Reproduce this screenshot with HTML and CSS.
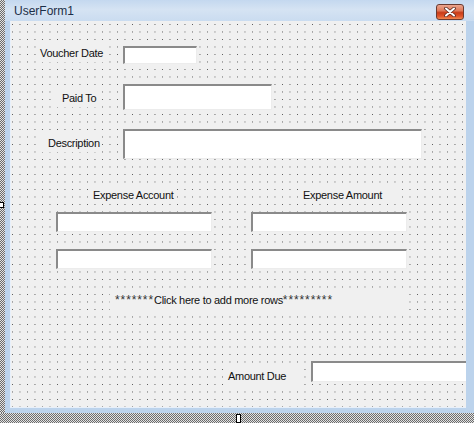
FILE: index.html
```html
<!DOCTYPE html>
<html>
<head>
<meta charset="utf-8">
<link rel="stylesheet" href="styles.css">
</head>
<body>
<div class="screen">
  <div class="hatch hatch-left"></div>
  <div class="window">
    <div class="titlebar">
      <span class="title">UserForm1</span>
      <span class="close">
        <svg width="14" height="10" viewBox="0 0 14 10"><path d="M3 1.5 L11 8.5 M11 1.5 L3 8.5" stroke="#5a2a20" stroke-width="3.6" stroke-linecap="round"/><path d="M3 1.5 L11 8.5 M11 1.5 L3 8.5" stroke="#ffffff" stroke-width="2" stroke-linecap="round"/></svg>
      </span>
    </div>
    <div class="client">
      <div class="canvas">
        <span class="lbl lbl-vd">Voucher Date</span>
        <span class="tb tb-vd"></span>
        <span class="lbl lbl-paid">Paid To</span>
        <span class="tb tb-paid"></span>
        <span class="lbl lbl-desc">Description</span>
        <span class="tb tb-desc"></span>
        <span class="lbl lbl-acc">Expense Account</span>
        <span class="lbl lbl-amt">Expense Amount</span>
        <span class="tb tb-acc1"></span>
        <span class="tb tb-acc2"></span>
        <span class="tb tb-amt1"></span>
        <span class="tb tb-amt2"></span>
        <span class="lbl lbl-add"><span class="ast">*******</span>Click here to add more rows<span class="ast">*********</span></span>
        <span class="lbl lbl-due">Amount Due</span>
        <span class="tb tb-due"></span>
      </div>
    </div>
  </div>
  <div class="hatch hatch-bottom"></div>
  <span class="handle handle-left"></span>
  <span class="handle handle-bottom"></span>
</div>
</body>
</html>
```
FILE: styles.css
```css
html, body {
  margin: 0;
  padding: 0;
  background: #ffffff;
}
.screen {
  position: relative;
  width: 474px;
  height: 423px;
  display: grid;
  grid-template-columns: 5px 469px;
  grid-template-rows: 413px 10px;
  overflow: hidden;
}
.hatch {
  background: repeating-conic-gradient(#6c6c6c 0 25%, #e2e2e2 0 50%) 0 0 / 2px 2px;
}
.hatch-bottom {
  grid-column: 1 / 3;
}
.window {
  display: flex;
  flex-direction: column;
  background: #bcd3ec;
  min-width: 0;
}
.titlebar {
  height: 21px;
  flex: none;
  display: flex;
  align-items: flex-start;
  background: linear-gradient(#c4d8ef, #d5e3f3 45%, #cadcf0);
}
.title {
  margin: 4px 0 0 9px;
  font-family: "Liberation Sans", Arial, sans-serif;
  font-size: 12px;
  line-height: 14px;
  color: #1c2f48;
}
.close {
  margin: 4px 10px 0 auto;
  width: 28px;
  height: 16px;
  box-sizing: border-box;
  border: 1px solid #6a3a30;
  border-radius: 3px;
  background: linear-gradient(#eba58f 0%, #df7a5a 40%, #c83c18 55%, #e0542a 80%, #f08a50 100%);
  display: flex;
  align-items: center;
  justify-content: center;
}
.close svg {
  display: block;
}
.client {
  flex: 1;
  margin: 0 8px 5px 5px;
  border-left: 1px solid #e8f0fa;
  border-bottom: 1px solid #e8f0fa;
  overflow: hidden;
  position: relative;
  background-color: #f0f0f0;
  background-image:
    linear-gradient(to right, transparent 1px, #f0f0f0 1px),
    linear-gradient(to bottom, #555555 1px, transparent 1px);
  background-size: 7.5px 7.5px;
  background-position: 1px 3px;
}
.canvas {
  position: relative;
  width: 100%;
  height: 100%;
  margin-left: -1px;
}
.lbl {
  position: absolute;
  height: 18px;
  line-height: 18px;
  background: #f0f0f0;
  font-family: "Liberation Sans", Arial, sans-serif;
  font-size: 11px;
  letter-spacing: -0.3px;
  color: #111111;
  white-space: nowrap;
  box-sizing: border-box;
}
.tb {
  position: absolute;
  box-sizing: border-box;
  background: #ffffff;
  border-top: 2px solid #8a8a8a;
  border-left: 2px solid #8a8a8a;
  border-right: 1px solid #ececec;
  border-bottom: 1px solid #ececec;
}
.lbl-vd { left: 28px; top: 23px; width: 66px; padding-left: 2px; }
.lbl-paid { left: 47px; top: 68px; width: 43px; padding-left: 5px; }
.lbl-desc { left: 32px; top: 113px; width: 59px; padding-left: 6px; }
.lbl-acc { left: 81px; top: 165px; width: 84px; padding-left: 2px; }
.lbl-amt { left: 290px; top: 165px; width: 101px; padding-left: 3px; }
.lbl-add { left: 100px; top: 269px; width: 296px; height: 25px; line-height: 20px; padding-left: 5px; }
.lbl-due { left: 215px; top: 346px; width: 74px; padding-left: 3px; }
.ast {
  font-size: 12px;
  letter-spacing: 0.9px;
  color: #333333;
}
.tb-vd { left: 113px; top: 25px; width: 74px; height: 18px; }
.tb-paid { left: 113px; top: 63px; width: 149px; height: 26px; }
.tb-desc { left: 113px; top: 108px; width: 299px; height: 30px; }
.tb-acc1 { left: 46px; top: 191px; width: 156px; height: 20px; }
.tb-acc2 { left: 46px; top: 228px; width: 156px; height: 20px; }
.tb-amt1 { left: 241px; top: 191px; width: 156px; height: 20px; }
.tb-amt2 { left: 241px; top: 228px; width: 156px; height: 20px; }
.tb-due { left: 301px; top: 340px; width: 160px; height: 21px; }
.handle {
  position: absolute;
  box-sizing: border-box;
  background: #ffffff;
  border: 1px solid #000000;
}
.handle-left { left: -1px; top: 202px; width: 5px; height: 6px; }
.handle-bottom { left: 236px; top: 414px; width: 5px; height: 9px; }
```
